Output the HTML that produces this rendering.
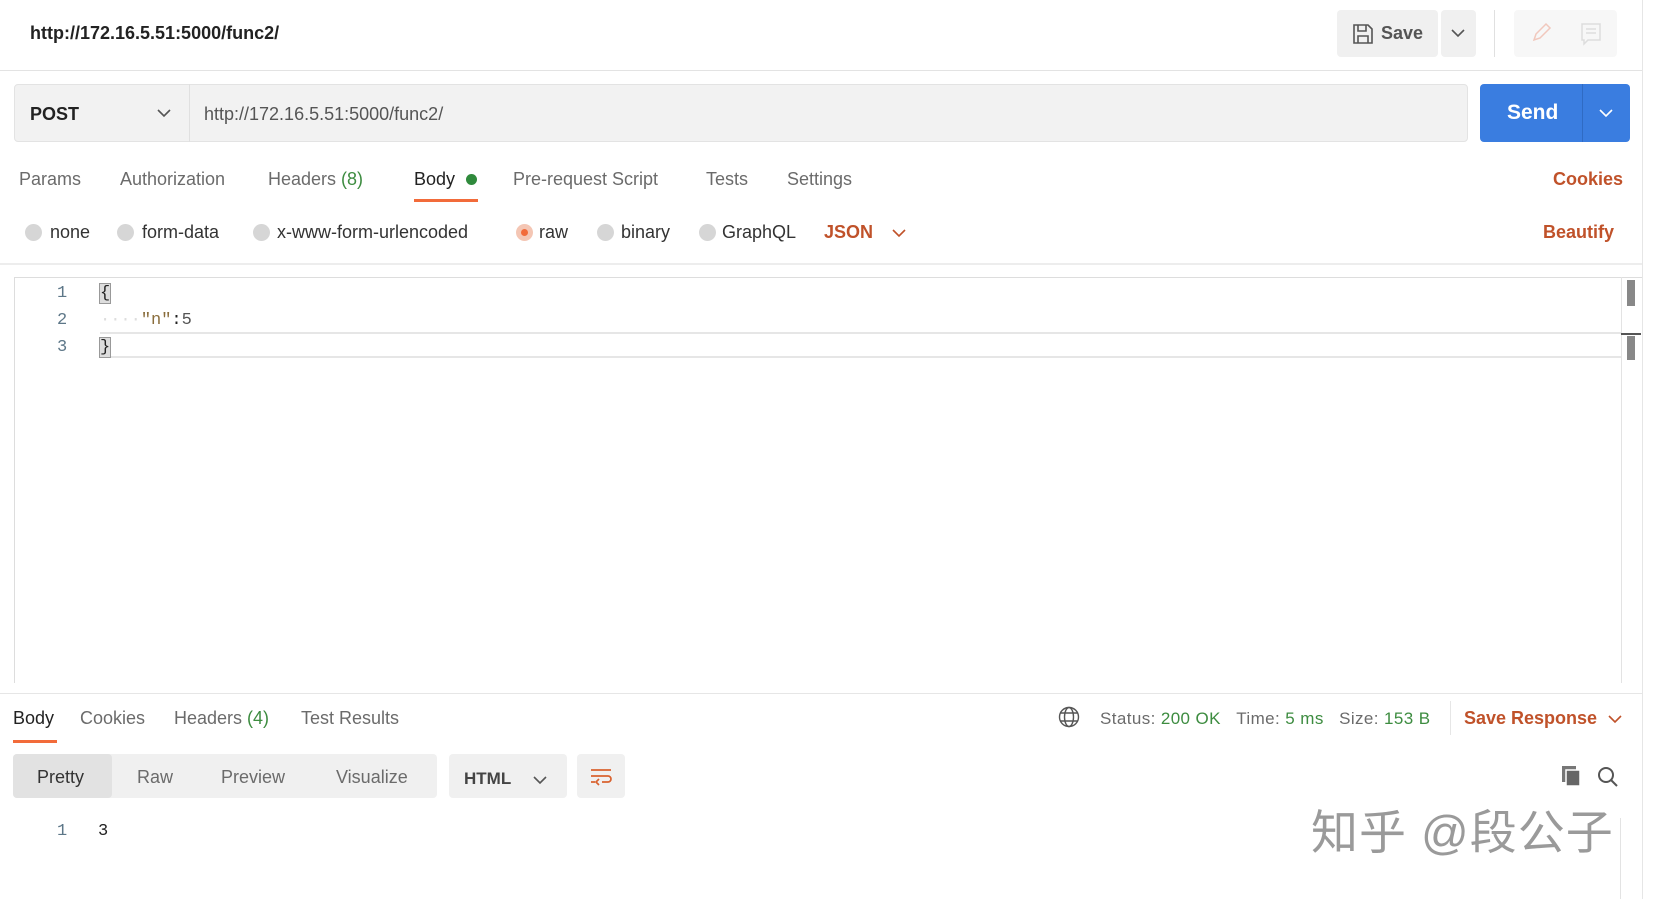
<!DOCTYPE html>
<html><head><meta charset="utf-8"><style>
*{margin:0;padding:0;box-sizing:border-box}
body{width:1660px;height:899px;background:#fff;position:relative;overflow:hidden;font-family:"Liberation Sans","Noto Sans CJK SC",sans-serif;color:#212121}
.a{position:absolute;white-space:nowrap}
.t{font-size:18px;color:#6b6b6b;line-height:20px}
.r{width:17px;height:17px;border-radius:50%;background:#d6d6d6;position:absolute}
.g{color:#3d8c40}
.o{color:#c0522a;font-weight:bold}
.mono{font-family:"Liberation Mono",monospace;font-size:17px}
</style></head><body>
<div class="a" style="left:1642px;top:0;width:1px;height:899px;background:#e6e6e6"></div>
<div class="a" style="left:30px;top:23px;font-size:18px;font-weight:bold;color:#222">http://172.16.5.51:5000/func2/</div>
<div class="a" style="left:1337px;top:10px;width:101px;height:47px;background:#f0f0f0;border-radius:4px"></div>
<svg class="a" style="left:1352px;top:23px" width="22" height="22" viewBox="0 0 22 22" fill="none" stroke="#555" stroke-width="1.6"><path d="M2 2h14l4 4v14H2z M6 2v6h8V2 M6 20v-7h10v7"/></svg>
<div class="a" style="left:1381px;top:23px;font-size:18px;font-weight:bold;color:#555">Save</div>
<div class="a" style="left:1441px;top:10px;width:35px;height:47px;background:#f0f0f0;border-radius:4px"></div>
<svg class="a" style="left:1451px;top:29px" width="14" height="9"><path d="M1 1l6 6 6-6" fill="none" stroke="#555" stroke-width="1.6"/></svg>
<div class="a" style="left:1494px;top:10px;width:1px;height:47px;background:#e0e0e0"></div>
<div class="a" style="left:1514px;top:10px;width:103px;height:47px;background:#f7f7f7;border-radius:4px"></div>
<svg class="a" style="left:1530px;top:22px" width="22" height="22"><path d="M4 18l2-6 10-10 4 4-10 10z" fill="none" stroke="#f1c8bd" stroke-width="1.5"/></svg>
<svg class="a" style="left:1580px;top:22px" width="22" height="24"><path d="M2 2h18v16H8l-4 4v-4H2z M6 7h10 M6 11h10" fill="none" stroke="#ddd" stroke-width="1.5"/></svg>
<div class="a" style="left:0;top:70px;width:1642px;height:1px;background:#e3e3e3"></div>

<div class="a" style="left:14px;top:84px;width:1454px;height:58px;background:#f2f2f2;border:1px solid #e3e3e3;border-radius:4px"></div>
<div class="a" style="left:189px;top:84px;width:1px;height:58px;background:#e0e0e0"></div>
<div class="a" style="left:30px;top:104px;font-size:18px;font-weight:bold;color:#222">POST</div>
<svg class="a" style="left:157px;top:109px" width="14" height="9"><path d="M1 1l6 6 6-6" fill="none" stroke="#555" stroke-width="1.6"/></svg>
<div class="a" style="left:204px;top:104px;font-size:18px;color:#555">http://172.16.5.51:5000/func2/</div>
<div class="a" style="left:1480px;top:84px;width:150px;height:58px;background:#3a7de0;border-radius:4px"></div>
<div class="a" style="left:1582px;top:84px;width:1px;height:58px;background:#2f6bc4"></div>
<div class="a" style="left:1507px;top:101px;font-size:21px;font-weight:bold;color:#fff">Send</div>
<svg class="a" style="left:1599px;top:109px" width="14" height="9"><path d="M1 1l6 6 6-6" fill="none" stroke="#fff" stroke-width="1.6"/></svg>

<div class="a t" style="left:19px;top:169px">Params</div>
<div class="a t" style="left:120px;top:169px">Authorization</div>
<div class="a t" style="left:268px;top:169px">Headers <span class="g">(8)</span></div>
<div class="a t" style="left:414px;top:169px;color:#222">Body</div>
<div class="a" style="left:466px;top:174px;width:11px;height:11px;border-radius:50%;background:#2f8a3c"></div>
<div class="a" style="left:414px;top:199px;width:64px;height:3px;background:#f26b3a"></div>
<div class="a t" style="left:513px;top:169px">Pre-request Script</div>
<div class="a t" style="left:706px;top:169px">Tests</div>
<div class="a t" style="left:787px;top:169px">Settings</div>
<div class="a o" style="right:37px;top:169px;font-size:18px">Cookies</div>

<div class="r" style="left:25px;top:224px"></div><div class="a t" style="left:50px;top:222px;color:#333">none</div>
<div class="r" style="left:117px;top:224px"></div><div class="a t" style="left:142px;top:222px;color:#333">form-data</div>
<div class="r" style="left:253px;top:224px"></div><div class="a t" style="left:277px;top:222px;color:#333">x-www-form-urlencoded</div>
<div class="r" style="left:516px;top:224px;background:#f4c6b4"></div><div class="a" style="left:521px;top:229px;width:7px;height:7px;border-radius:50%;background:#f26b3a"></div><div class="a t" style="left:539px;top:222px;color:#333">raw</div>
<div class="r" style="left:597px;top:224px"></div><div class="a t" style="left:621px;top:222px;color:#333">binary</div>
<div class="r" style="left:699px;top:224px"></div><div class="a t" style="left:722px;top:222px;color:#333">GraphQL</div>
<div class="a o" style="left:824px;top:222px;font-size:18px">JSON</div>
<svg class="a" style="left:892px;top:229px" width="14" height="9"><path d="M1 1l6 6 6-6" fill="none" stroke="#c0522a" stroke-width="1.6"/></svg>
<div class="a o" style="right:46px;top:222px;font-size:18px">Beautify</div>
<div class="a" style="left:0;top:263px;width:1642px;height:2px;background:#ededed"></div>

<div class="a" style="left:14px;top:277px;width:1628px;height:406px;border-left:1px solid #ddd;border-top:1px solid #ddd"></div>
<div class="a" style="left:100px;top:332px;width:1521px;height:26px;border-top:2px solid #e6e6e6;border-bottom:2px solid #e6e6e6"></div>
<div class="a" style="left:1621px;top:277px;width:1px;height:406px;background:#e3e3e3"></div>
<div class="a" style="left:1627px;top:280px;width:8px;height:26px;background:#888"></div>
<div class="a" style="left:1621px;top:333px;width:20px;height:2px;background:#555"></div>
<div class="a" style="left:1627px;top:336px;width:8px;height:24px;background:#888"></div>
<div class="a mono" style="left:57px;top:280px;color:#5d7788;line-height:27px">1<br>2<br>3</div>
<div class="a mono" style="left:100px;top:280px;line-height:27px;color:#222"><span style="background:#ddd;outline:1px solid #999">{</span><br><span style="color:#ddd">····</span><span style="color:#8a6d3b">"n"</span>:<span style="color:#555">5</span><br><span style="background:#ddd;outline:1px solid #999">}</span></div>

<div class="a" style="left:0;top:693px;width:1642px;height:1px;background:#e6e6e6"></div>
<div class="a t" style="left:13px;top:708px;color:#222">Body</div>
<div class="a" style="left:13px;top:740px;width:44px;height:3px;background:#f26b3a"></div>
<div class="a t" style="left:80px;top:708px">Cookies</div>
<div class="a t" style="left:174px;top:708px">Headers <span class="g">(4)</span></div>
<div class="a t" style="left:301px;top:708px">Test Results</div>
<svg class="a" style="left:1058px;top:706px" width="22" height="22" fill="none" stroke="#555" stroke-width="1.4"><circle cx="11" cy="11" r="9.5"/><ellipse cx="11" cy="11" rx="4.5" ry="9.5"/><path d="M2 7h18M2 15h18"/></svg>
<div class="a t" style="left:1100px;top:709px;font-size:17px;letter-spacing:0.4px">Status: <span class="g">200 OK</span>&nbsp;&nbsp;&nbsp;Time: <span class="g">5 ms</span>&nbsp;&nbsp;&nbsp;Size: <span class="g">153 B</span></div>
<div class="a" style="left:1450px;top:701px;width:1px;height:34px;background:#e6e6e6"></div>
<div class="a o" style="left:1464px;top:708px;font-size:18px">Save Response</div>
<svg class="a" style="left:1608px;top:715px" width="14" height="9"><path d="M1 1l6 6 6-6" fill="none" stroke="#c0522a" stroke-width="1.6"/></svg>

<div class="a" style="left:13px;top:754px;width:424px;height:44px;background:#f0f0f0;border-radius:4px"></div>
<div class="a" style="left:13px;top:754px;width:99px;height:44px;background:#e2e2e2;border-radius:4px"></div>
<div class="a t" style="left:37px;top:767px;color:#333">Pretty</div>
<div class="a t" style="left:137px;top:767px">Raw</div>
<div class="a t" style="left:221px;top:767px">Preview</div>
<div class="a t" style="left:336px;top:767px">Visualize</div>
<div class="a" style="left:449px;top:754px;width:118px;height:44px;background:#f0f0f0;border-radius:4px"></div>
<div class="a" style="left:464px;top:769px;font-size:17px;font-weight:bold;color:#444">HTML</div>
<svg class="a" style="left:533px;top:776px" width="14" height="9"><path d="M1 1l6 6 6-6" fill="none" stroke="#555" stroke-width="1.6"/></svg>
<div class="a" style="left:577px;top:754px;width:48px;height:44px;background:#f0f0f0;border-radius:4px"></div>
<svg class="a" style="left:589px;top:766px" width="24" height="22" fill="none" stroke="#d9622f" stroke-width="1.7"><path d="M2 4h20M2 10h17a3 3 0 0 1 0 6h-6M10 13l-3 3 3 3M2 16h4"/></svg>
<svg class="a" style="left:1560px;top:764px" width="24" height="24"><rect x="2" y="2" width="14" height="16" fill="#777"/><rect x="6" y="6" width="14" height="16" fill="#666" stroke="#fff" stroke-width="1.5"/></svg>
<svg class="a" style="left:1596px;top:765px" width="24" height="24" fill="none" stroke="#555" stroke-width="2"><circle cx="10" cy="10" r="7"/><path d="M15 15l6 6"/></svg>
<div class="a mono" style="left:57px;top:822px;color:#5d7788">1</div>
<div class="a mono" style="left:98px;top:822px;color:#222">3</div>
<div class="a" style="left:1311px;top:805px;font-size:47px;line-height:56px;color:#9a9a9a;letter-spacing:1px">知乎 @段公子</div>
<div class="a" style="left:1620px;top:818px;width:1px;height:81px;background:#e3e3e3"></div>
</body></html>
